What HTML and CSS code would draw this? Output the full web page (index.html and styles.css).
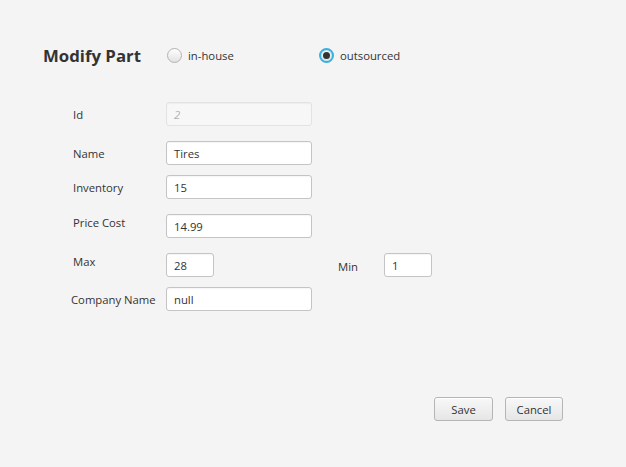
FILE: index.html
```html
<!DOCTYPE html>
<html>
<head>
<meta charset="utf-8">
<link rel="stylesheet" href="styles.css">
</head>
<body>
<div class="window">
  <div class="header">
    <h1 class="title">Modify Part</h1>
    <label class="radio radio-inhouse"><span class="dot"></span><span>in-house</span></label>
    <label class="radio radio-out selected"><span class="dot"></span><span>outsourced</span></label>
  </div>
  <div class="form">
    <div class="lbl">Id</div>
    <div class="field wide disabled">2</div>

    <div class="lbl">Name</div>
    <div class="field wide">Tires</div>

    <div class="lbl">Inventory</div>
    <div class="field wide">15</div>

    <div class="lbl raise">Price Cost</div>
    <div class="field wide">14.99</div>

    <div class="lbl raise">Max</div>
    <div class="maxrow">
      <div class="field narrow">28</div>
      <div class="lbl minlbl">Min</div>
      <div class="field narrow">1</div>
    </div>

    <div class="lbl company">Company Name</div>
    <div class="field wide">null</div>
  </div>
  <div class="buttons">
    <button class="btn save">Save</button>
    <button class="btn cancel">Cancel</button>
  </div>
</div>
</body>
</html>
```
FILE: styles.css
```css
html, body {
  margin: 0;
  padding: 0;
  background: #f4f4f4;
}
body {
  width: 626px;
  height: 467px;
  font-family: "Open Sans", "Noto Sans", sans-serif;
  font-size: 11.3px;
  color: #333333;
  overflow: hidden;
}
.window {
  display: flex;
  flex-direction: column;
}
.header {
  display: flex;
  align-items: center;
  height: 24px;
  margin-top: 43px;
  padding-left: 43px;
}
.title {
  margin: 0;
  font-size: 16.8px;
  font-weight: 700;
  color: #333333;
  width: 124px;
}
.radio {
  display: flex;
  align-items: center;
  gap: 6px;
  color: #333333;
}
.radio-inhouse {
  width: 152px;
}
.dot {
  box-sizing: border-box;
  width: 15px;
  height: 15px;
  border-radius: 50%;
  border: 1px solid #b2b2b2;
  background: linear-gradient(#fefefe, #e2e2e2);
  display: flex;
  align-items: center;
  justify-content: center;
}
.selected .dot {
  border: 2px solid #3ab0de;
  background: linear-gradient(#fafafa, #e4e4e4);
  box-shadow: inset 0 0 0 1px #c9e6f2;
}
.selected .dot::after {
  content: "";
  width: 7px;
  height: 7px;
  border-radius: 50%;
  background: #333333;
}
.form {
  display: grid;
  grid-template-columns: 93px auto;
  grid-template-rows: 39px 34px 39px 39px 34px 24px;
  align-items: start;
  margin-top: 35px;
  padding-left: 73px;
}
.lbl {
  box-sizing: border-box;
  height: 24px;
  padding-top: 1px;
  line-height: 23px;
  white-space: nowrap;
}
.lbl.raise {
  margin-top: -4px;
}
.lbl.company {
  margin-left: -2px;
}
.field {
  box-sizing: border-box;
  height: 24px;
  line-height: 21px;
  padding: 1px 7px 0;
  background: #ffffff;
  border: 1px solid #c4c4c4;
  border-radius: 3px;
  box-shadow: inset 0 1px 1px rgba(0,0,0,0.04);
  color: #333333;
}
.field.wide {
  width: 146px;
}
.field.narrow {
  width: 48px;
}
.field.disabled {
  background: #f7f7f7;
  border-color: #e3e3e3;
  color: #b0b0b0;
  font-style: italic;
}
.maxrow {
  display: flex;
  align-items: start;
}
.minlbl {
  margin-left: 124px;
  width: 46px;
  margin-top: 1px;
}
.buttons {
  display: flex;
  gap: 12px;
  margin-top: 86px;
  padding-left: 434px;
}
.btn {
  box-sizing: border-box;
  height: 24px;
  padding: 0;
  font-family: inherit;
  font-size: 11.3px;
  color: #333333;
  border: 1px solid #b5b5b5;
  border-radius: 3px;
  background: linear-gradient(#f8f8f8, #e6e6e6);
  box-shadow: inset 0 1px 0 #ffffff;
}
.btn.save { width: 59px; }
.btn.cancel { width: 58px; }
```
